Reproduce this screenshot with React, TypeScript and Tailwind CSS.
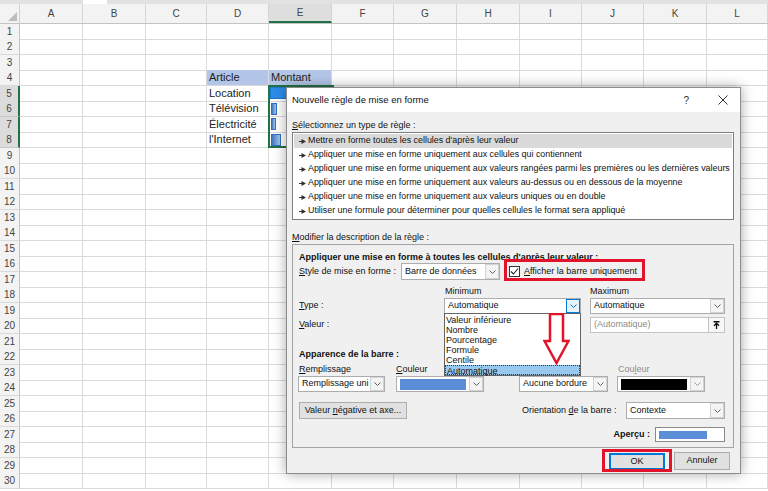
import React from 'react';

const COLS = ['A', 'B', 'C', 'D', 'E', 'F', 'G', 'H', 'I', 'J', 'K', 'L'];
const GRID = 'grid grid-cols-[20px_63px_63px_61px_62px_63px_62px_63px_63px_62px_62px_63px_1fr]';

const Chevron = ({ color = '#606060' }: { color?: string }) => (
  <svg width="7" height="4" viewBox="0 0 7 4">
    <path d="M0.5 0.5 L3.5 3.5 L6.5 0.5" fill="none" stroke={color} strokeWidth="1" />
  </svg>
);

const U = ({ children }: { children: React.ReactNode }) => (
  <span className="underline underline-offset-[1px]">{children}</span>
);

interface ComboProps {
  className: string;
  children?: React.ReactNode;
  active?: boolean;
  disabled?: boolean;
}

// combobox of the dialog: text area + chevron square
const Combo: React.FC<ComboProps> = ({ className, children, active, disabled }) => (
  <div className={`flex items-stretch bg-white border border-[#adadad] ${className}`}>
    <div className="flex-1 flex items-center px-[3px] overflow-hidden whitespace-nowrap">{children}</div>
    <div
      className={`w-[14px] flex items-center justify-center border ${
        active ? 'border-[#0078d7] bg-[#e5f1fb]' : 'border-[#d2d2d2] bg-[#f4f4f4]'
      }`}
    >
      <Chevron color={active ? '#0078d7' : disabled ? '#9a9a9a' : '#606060'} />
    </div>
  </div>
);

const ruleTypes = [
  "Mettre en forme toutes les cellules d'après leur valeur",
  'Appliquer une mise en forme uniquement aux cellules qui contiennent',
  'Appliquer une mise en forme uniquement aux valeurs rangées parmi les premières ou les dernières valeurs',
  'Appliquer une mise en forme uniquement aux valeurs au-dessus ou en dessous de la moyenne',
  'Appliquer une mise en forme uniquement aux valeurs uniques ou en double',
  'Utiliser une formule pour déterminer pour quelles cellules le format sera appliqué',
];

const minTypes = ['Valeur inférieure', 'Nombre', 'Pourcentage', 'Formule', 'Centile', 'Automatique'];

const RuleArrow = () => (
  <svg width="7" height="5" viewBox="0 0 7 5" className="shrink-0">
    <rect x="0" y="2" width="3" height="1" fill="#333" />
    <polygon points="2.5,0 7,2.5 2.5,5" fill="#333" />
  </svg>
);

function cellContent(row: number, col: string) {
  if (row === 4 && col === 'D') return <span className="pl-[2px]">Article</span>;
  if (row === 4 && col === 'E') return <span className="pl-[2px]">Montant</span>;
  if (col === 'D') {
    const names: Record<number, string> = { 5: 'Location', 6: 'Télévision', 7: 'Électricité', 8: "l'Internet" };
    if (names[row]) return <span className="pl-[2px]">{names[row]}</span>;
  }
  if (col === 'E') {
    if (row === 5) return <div className="h-[12px] w-full ml-[1px] bg-[#2c8ce8] border border-[#1f78d1]" />;
    if (row === 6) return <div className="h-[12px] w-[6px] ml-[2px] bg-gradient-to-r from-[#3f78c2] to-[#a9c8ec] border border-[#2e6fbf]" />;
    if (row === 7) return <div className="h-[12px] w-[5px] ml-[2px] bg-gradient-to-r from-[#3f78c2] to-[#a9c8ec] border border-[#2e6fbf]" />;
    if (row === 8) return <div className="h-[12px] w-[10px] ml-[2px] bg-gradient-to-r from-[#3f78c2] to-[#a9c8ec] border border-[#2e6fbf]" />;
  }
  return null;
}

const Sheet = () => {
  const rows = Array.from({ length: 30 }, (_, i) => i + 1);
  return (
    <div className="flex flex-col">
      <div className="h-[4px] flex">
        <div className="w-[83px] bg-[#e2e2e2]" />
        <div className="w-[24px] bg-white" />
        <div className="flex-1 bg-[#e2e2e2]" />
      </div>
      <div className={`${GRID} h-[19.5px] bg-[#f3f3f3] border-b border-[#c3c3c3] text-[10px] text-[#444]`}>
        <div className="flex items-end justify-end pr-[2px] pb-[2px] border-r border-[#d0d0d0]">
          <svg width="9" height="9" viewBox="0 0 9 9">
            <polygon points="9,0 9,9 0,9" fill="#bdbdbd" />
          </svg>
        </div>
        {COLS.map((c) => (
          <div
            key={c}
            className={`flex items-center justify-center border-r border-[#d6d6d6] ${
              c === 'E' ? 'bg-[#dedede] border-b-2 border-b-[#217346]' : ''
            }`}
          >
            {c}
          </div>
        ))}
      </div>
      {rows.map((r) => {
        const sel = r >= 5 && r <= 8;
        return (
          <div key={r} className={`${GRID} h-[15.5px] text-[11px] text-[#222]`}>
            <div
              className={`flex items-center justify-center text-[10px] text-[#444] border-b ${
                sel
                  ? 'bg-[#dcdcdc] border-b-[#c8c8c8] border-r-2 border-r-[#217346]'
                  : 'bg-[#f3f3f3] border-b-[#dadada] border-r border-r-[#c3c3c3]'
              }`}
            >
              {r}
            </div>
            {COLS.map((c) => {
              const blue = r === 4 && (c === 'D' || c === 'E');
              return (
                <div
                  key={c}
                  className={`flex items-center overflow-hidden whitespace-nowrap border-r border-b border-[#dadada] ${
                    blue ? 'bg-[#b4c6e7]' : ''
                  }`}
                >
                  {cellContent(r, c)}
                </div>
              );
            })}
          </div>
        );
      })}
    </div>
  );
};

const Dialog = () => (
  <div className="absolute left-[286px] top-[87px] w-[455px] h-[387px] bg-[#f0f0f0] border border-[#8c8c8c] shadow-[0_0_12px_rgba(0,0,0,0.35)] text-[9px] text-[#111]">
    {/* title bar */}
    <div className="h-[24px] bg-white flex items-center pl-[5px]">
      <span className="text-[9.5px]">Nouvelle règle de mise en forme</span>
      <div className="ml-auto flex items-center gap-[29px] pr-[12px]">
        <span className="text-[10px] text-[#333]">?</span>
        <svg width="10" height="10" viewBox="0 0 10 10">
          <path d="M0.5 0.5 L9.5 9.5 M9.5 0.5 L0.5 9.5" stroke="#333" strokeWidth="1" />
        </svg>
      </div>
    </div>

    <div className="pl-[5px] pr-[6px] flex flex-col">
      <div className="mt-[7px] h-[12px] leading-[12px]">
        <U>S</U>électionnez un type de règle :
      </div>
      <div className="mt-[1px] h-[88px] bg-white border border-[#7f7f7f] p-[1px] flex flex-col">
        {ruleTypes.map((t, i) => (
          <div
            key={t}
            className={`h-[14px] flex items-center gap-[2px] pl-[5px] whitespace-nowrap overflow-hidden text-[8.9px] ${
              i === 0 ? 'bg-[#dadada]' : ''
            }`}
          >
            <RuleArrow />
            <span>{t}</span>
          </div>
        ))}
      </div>

      <div className="mt-[11px] h-[12px] leading-[12px]">
        <U>M</U>odifier la description de la règle :
      </div>
      <div className="mt-[1px] h-[204px] border border-[#a3a3a3] pl-[6px] pr-[7px] pt-[6px] flex flex-col">
        <div className="h-[12px] leading-[12px] font-bold">
          Appliquer une mise en forme à toutes les cellules d'après leur valeur :
        </div>
        <div className="h-[17px] flex items-center">
          <span className="w-[102px]">
            <U>S</U>tyle de mise en forme :
          </span>
          <Combo className="w-[99px] h-[17px]">Barre de données</Combo>
          <div className="ml-[9px] w-[11px] h-[11px] bg-white border border-[#333] flex items-center justify-center">
            <svg width="9" height="9" viewBox="0 0 9 9">
              <path d="M1 4.5 L3.5 7 L8 1.5" fill="none" stroke="#222" strokeWidth="1.1" />
            </svg>
          </div>
          <span className="ml-[4px]">
            <U>A</U>fficher la barre uniquement
          </span>
        </div>
        <div className="mt-[5px] h-[12px] leading-[12px] flex">
          <span className="w-[146px]" />
          <span className="w-[145px]">Minimum</span>
          <span>Maximum</span>
        </div>
        <div className="mt-[1px] h-[16px] flex items-center">
          <span className="w-[145px]">
            <U>T</U>ype :
          </span>
          <Combo className="w-[137px] h-[16px]" active>
            Automatique
          </Combo>
          <Combo className="ml-[9px] w-[135px] h-[16px]">Automatique</Combo>
        </div>
        <div className="mt-[3px] h-[16px] flex items-center">
          <span className="w-[145px]">
            <U>V</U>aleur :
          </span>
          <div className="w-[137px] h-[16px] bg-white border border-[#adadad]" />
          <div className="ml-[9px] w-[135px] h-[16px] bg-white border border-[#c4c4c4] flex items-stretch">
            <span className="flex-1 flex items-center px-[3px] text-[#8a8a8a]">(Automatique)</span>
            <div className="w-[16px] flex items-center justify-center border-l border-[#c4c4c4] bg-[#f7f7f7]">
              <svg width="7" height="8" viewBox="0 0 7 8">
                <path d="M0.5 0.75 H6.5 M3.5 2.2 V8 M1 4.7 L3.5 2.2 L6 4.7" fill="none" stroke="#111" strokeWidth="1.3" />
              </svg>
            </div>
          </div>
        </div>

        <div className="mt-[15px] h-[12px] leading-[12px] font-bold">Apparence de la barre :</div>
        <div className="mt-[3px] h-[12px] leading-[12px] flex">
          <span className="w-[97px]">
            <U>R</U>emplissage
          </span>
          <span className="w-[222px]">
            <U>C</U>ouleur
          </span>
          <span className="text-[#8d8d8d]">
            Cou<U>l</U>eur
          </span>
        </div>
        <div className="mt-[1px] h-[16px] flex items-center -ml-[1px]">
          <Combo className="w-[87px] h-[16px]">Remplissage uni</Combo>
          <Combo className="ml-[11px] w-[88px] h-[16px]">
            <div className="w-full h-[11px] bg-[#5b8ed6]" />
          </Combo>
          <Combo className="ml-[35px] w-[89px] h-[16px]">Aucune bordure</Combo>
          <Combo className="ml-[9px] w-[88px] h-[16px]" disabled>
            <div className="w-full h-[11px] bg-black" />
          </Combo>
        </div>
        <div className="mt-[10px] h-[17px] flex items-center">
          <div className="w-[108px] h-[17px] bg-[#e1e1e1] border border-[#adadad] flex items-center justify-center">
            <span>
              Valeur <U>n</U>égative et axe...
            </span>
          </div>
          <span className="ml-[115px] w-[104px] whitespace-nowrap">
            Orientation <U>d</U>e la barre :
          </span>
          <Combo className="w-[99px] h-[17px]">Contexte</Combo>
        </div>
        <div className="mt-[8px] h-[15px] flex items-center justify-end pr-[1px]">
          <span className="font-bold">Aperçu :</span>
          <div className="ml-[5px] w-[70px] h-[15px] bg-white border border-[#8a8a8a] flex items-center pl-[3px]">
            <div className="w-[48px] h-[8px] bg-[#5b8ed6]" />
          </div>
        </div>
      </div>

      <div className="mt-[5px] flex justify-end pr-[4px]">
        <div className="w-[56px] h-[17px] bg-[#e1e1e1] border-2 border-[#0078d7] flex items-center justify-center">
          OK
        </div>
        <div className="ml-[9px] -mt-[1px] w-[56px] h-[18px] bg-[#e1e1e1] border border-[#adadad] flex items-center justify-center">
          Annuler
        </div>
      </div>
    </div>

    {/* open list of the minimum type */}
    <div className="absolute left-[157px] top-[225px] w-[137px] h-[63px] bg-white border border-[#646464] pt-[1px] flex flex-col">
      {minTypes.map((t, i) => (
        <div
          key={t}
          className={`h-[10px] leading-[10px] pl-[1px] ${
            i === minTypes.length - 1 ? 'bg-[#99c9ef] border border-dotted border-[#333] leading-[8px]' : ''
          }`}
        >
          {t}
        </div>
      ))}
    </div>

    {/* red annotations */}
    <svg className="absolute left-[256px] top-[225px]" width="27" height="52" viewBox="0 0 27 52">
      <path d="M7 1 H20 V28 H25.5 L13.5 50 L1.5 28 H7 Z" fill="white" stroke="#e1142b" strokeWidth="2.5" strokeLinejoin="miter" />
    </svg>
    <div className="absolute left-[217px] top-[171px] w-[141px] h-[22px] border-[3px] border-[#e1142b]" />
    <div className="absolute left-[315px] top-[361px] w-[70px] h-[23px] border-[3px] border-[#e1142b]" />
  </div>
);

export default function App() {
  return (
    <div className="relative w-[768px] h-[491px] overflow-hidden bg-white font-['Liberation_Sans',Arial,sans-serif]">
      <Sheet />
      {/* selection frame E5:E8 */}
      <div className="absolute left-[268px] top-[85px] w-[66px] h-[63px] border-2 border-[#217346]" />
      <Dialog />
    </div>
  );
}
